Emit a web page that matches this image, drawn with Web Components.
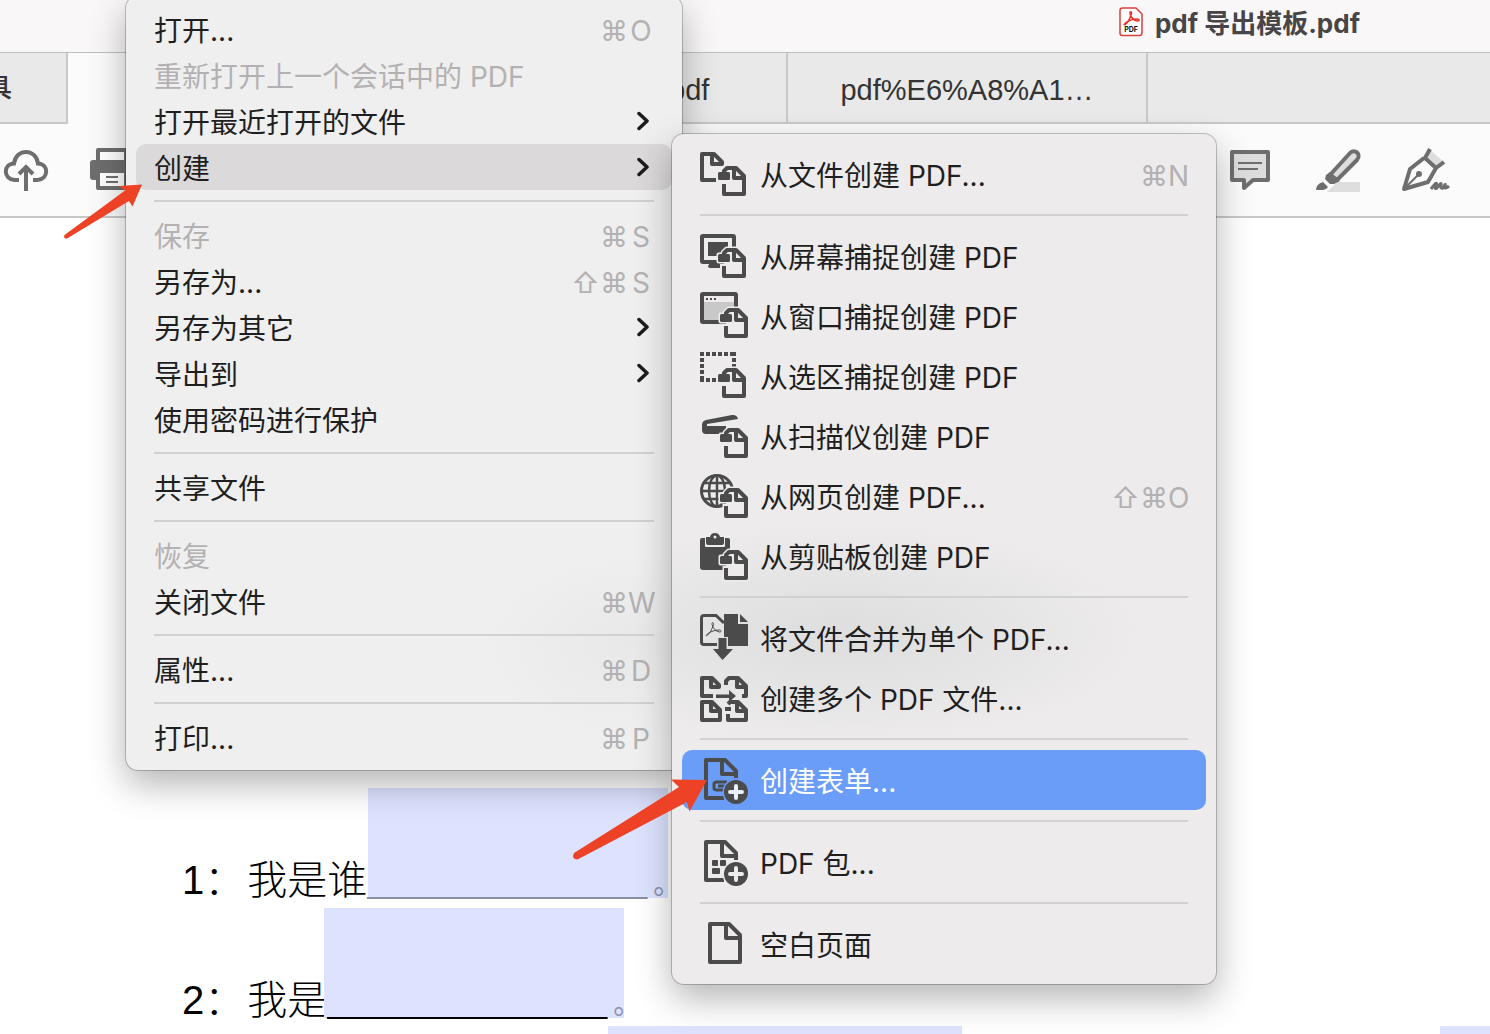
<!DOCTYPE html>
<html lang="zh-CN">
<head>
<meta charset="utf-8">
<title>pdf导出模板.pdf</title>
<style>
  html, body { height: 100%; }
  body { margin: 0; overflow: hidden; background: #fff; color: #1f1f1f; font-family: Inter, "Noto Sans CJK SC", sans-serif; }
</style>
</head>
<body>
<reader-app></reader-app>
<script>
const define = (name, html, setup) => {
  const template = document.createElement('template');
  template.innerHTML = html;
  customElements.define(name, class extends HTMLElement {
    constructor() {
      super();
      this.attachShadow({ mode: 'open' }).append(template.content.cloneNode(true));
    }
    connectedCallback() { if (setup) setup(this, this.shadowRoot); }
  });
};

const acrobat = '<path d="M7 21.500c2-1 5-6 6.500-11 .5-2.500-2-2.500-1.500 0 1 4 4 7 7.500 7.500 2.500 0 2-2-.5-2-4 0-8 1.500-11 3.500-2 1.500-2.500 3-1 2z"/>';

/* A page with a folded corner, fed by a connector on its left side. */
const target = (dx = 2, dy = 0) => {
  const lines = '<path d="M24 34V44H44V26L36 18H27L24 21V26M34 18V28H44"/>';
  const plug = '<rect x="18" y="22" width="12" height="8" rx="1.500" stroke="none"/>';
  return `<g transform="translate(${dx} ${dy})" stroke-linejoin="round">
    <path d="M24 32V44H44V26L36 18H27L24 21V30" fill="var(--surface)" stroke="var(--surface)" stroke-width="7"/>
    <rect x="16.500" y="20.500" width="14" height="11" rx="2" fill="var(--surface)"/>
    <g fill="none" stroke="currentColor" stroke-width="4">${lines}</g>
    <g fill="currentColor">${plug}</g></g>`;
};
const plusBadge = `<circle cx="36" cy="36" r="13.500" fill="var(--surface)"/><circle cx="36" cy="36" r="12" fill="currentColor"/>
  <path d="M36 30v12M30 36h12" stroke="var(--plus, var(--surface))" stroke-width="4" stroke-linecap="round"/>`;
const bigPage = '<path d="M24 42H6V4H25L36 15V22M22 4V18H36" fill="none" stroke="currentColor" stroke-width="4" stroke-linejoin="round"/>';

const icons = {
  file: `<path d="M16 30H2V4H14L22 12V14H12V4" fill="none" stroke="currentColor" stroke-width="4" stroke-linejoin="round"/>${target(0)}`,
  screen: `<rect x="2" y="4" width="32" height="26" rx="1" fill="none" stroke="currentColor" stroke-width="4"/><path d="M8 10h20v14H8zM10 31h10v5H10q-2 0-2-2z" fill="currentColor"/>${target(0)}`,
  window: `<path d="M4 10h30v18H4z" fill="#c9c8c9"/><rect x="2" y="2" width="34" height="28" rx="1" fill="none" stroke="currentColor" stroke-width="4"/><path d="M6 6h2v2H6zM10 6h2v2h-2zM14 6h2v2h-2z" fill="currentColor"/>${target()}`,
  region: `<g fill="none" stroke="currentColor" stroke-width="4"><path d="M0 2H36" stroke-dasharray="4 2"/><path d="M2 6V30M34 0V16" stroke-dasharray="4 2"/><path d="M0 28H20" stroke-dasharray="4 2"/></g>${target(0)}`,
  scanner: `<path d="M2 13Q2 9 6 8L32 3Q37 2.500 38 7L7 12V14H26V22H6Q2 22 2 18z" fill="currentColor"/>${target()}`,
  web: `<g fill="none" stroke="currentColor" stroke-width="2.500"><circle cx="17" cy="19" r="15.500" stroke-width="3"/><ellipse cx="17" cy="19" rx="8" ry="15.500"/><path d="M17 4v30M2 19h30M5 11h24M5 27h24"/></g>${target()}`,
  clipboard: `<path d="M2 6H28Q30 6 30 8V38H3Q0 38 0 35V8Q0 6 2 6z" fill="currentColor"/><path d="M5 4H25V14Q25 15 24 15H6Q5 15 5 14z" fill="var(--surface)"/><path d="M6 5H10Q11 1 15 1T20 5H24V11Q24 13 22 13H8Q6 13 6 11z" fill="currentColor"/><circle cx="15" cy="5" r="1.500" fill="var(--surface)"/>${target(2, 2)}`,
  combine: `<path d="M17 30.500H4Q1.500 30.500 1.500 28V4Q1.500 1.500 4 1.500H16L24 9" fill="none" stroke="currentColor" stroke-width="3"/><path d="M24 0H38V10H48V32H24zM40 0L48 8H40z" fill="currentColor"/><path d="M17 23h11v11h6L22.500 47 11 34h6z" fill="#e2e1e2"/><path d="M18.500 24h8v11h6.500L22.500 46 13 35h5.500z" fill="currentColor"/><g fill="none" stroke="currentColor" stroke-width="1">${acrobat}</g>`,
  multiple: `<g fill="none" stroke="currentColor" stroke-width="4" stroke-linejoin="round"><path d="M13 22H2V4H12L19 11V13H11V4M26 11V7L29 4H38L46 12V22H42M37 5V13H46M2 28H12L20 36V46H2zM11 28V37H20M28 40V46H46V36L38 28H30L28 30M37 28V37H46M25 35H31"/></g><path d="M16 20.500H29V16L36 22L29 28V24H16z" fill="currentColor"/>`,
  form: `${bigPage}<path d="M27 26H17Q14 26 14 28V32Q14 34 17 34H24M18 30H27" fill="none" stroke="currentColor" stroke-width="3"/>${plusBadge}`,
  portfolio: `${bigPage}<g fill="currentColor"><rect x="12" y="22" width="6" height="6" rx="1"/><rect x="20" y="22" width="6" height="6" rx="1"/><rect x="12" y="30" width="8" height="6" rx="1"/></g>${plusBadge}`,
  blank: '<path d="M10 4H29L40 15V42H10zM26 4V18H40" fill="none" stroke="currentColor" stroke-width="4" stroke-linejoin="round"/>',

  cloud: '<g fill="none" stroke="currentColor" stroke-width="4"><path d="M15 32H10.500C-1 31-1 16 10 15.500C12 0 32 0 34 15.500C45 16 45 31 33.500 32H29"/><path d="M22 43V19M15 26L22 19L29 26" /></g>',
  printer: '<path d="M8 14V2H36V14" fill="#fff" stroke="currentColor" stroke-width="4" stroke-linejoin="round"/><rect y="12" width="44" height="20" rx="3" fill="currentColor"/><path d="M8 23H36V40H8z" fill="#fff" stroke="currentColor" stroke-width="4" stroke-linejoin="round"/><path d="M16 29H28M16 34H28" stroke="currentColor" stroke-width="2"/>',
  comment: '<path d="M2 4H38V32H23L14 40V32H2z" fill="#ddd" stroke="currentColor" stroke-width="4" stroke-linejoin="round"/><path d="M8 15H32M8 21H28" stroke="currentColor" stroke-width="2"/>',
  marker: '<path d="M11 44L21 34H44V44z" fill="#dedede"/><path d="M14 27L34 5C38 0 46 6 41 12L21 32z" fill="#ddd" stroke="currentColor" stroke-width="4" stroke-linejoin="round"/><path d="M10 27L14 24L24 33L18 36H14L9 31zM0 42Q0 36 7 34L12 39Q10 42 7 42z" fill="currentColor"/>',
  pen: '<path d="M28 2L42 14L35 20L23 9z" fill="#ddd"/><g fill="none" stroke="currentColor" stroke-width="4" stroke-linejoin="round"><path d="M28 1L23 10L34 20L42 14M22 10L8 21L2 41L26 34L34 20"/><path d="M3 40L16 27" stroke-width="2"/><path d="M29 41Q36 32 34 37T35 40Q40 33 39 37T41 40Q44 34 43 38T47 38" stroke-width="3"/></g><circle cx="17" cy="26" r="3" fill="currentColor"/>',
};

define('line-icon', '<style>:host{display:block;flex:none}svg{display:block;overflow:visible}</style><svg aria-hidden="true"></svg>', (el, root) => {
  const size = el.getAttribute('size') || 48;
  const svg = root.querySelector('svg');
  svg.setAttribute('width', size);
  svg.setAttribute('height', size);
  svg.innerHTML = icons[el.getAttribute('name')];
});

define('title-bar', `<style>
  :host{display:flex;justify-content:flex-end;align-items:flex-start;gap:12px;height:52px;padding:7px 130px 0 0;background:#f9f7f8;border-bottom:1px solid #bfbfbf;height:45px}
  h1{margin:0;font-size:26px;line-height:34px;font-weight:700;color:#474545;white-space:nowrap}
  svg{display:block;flex:none}
</style>
<svg width="24" height="30"><path d="M3.500 1H17L23 7V25.500Q23 28.500 20.500 28.500H3.500Q1 28.500 1 26V3.500Q1 1 3.500 1z" fill="#fff" stroke="#d8403a" stroke-width="1.500"/><g fill="none" stroke="#e5322b" stroke-width="1.500" transform="translate(-1 -4)">${acrobat}</g><text x="12" y="25" text-anchor="middle" font-family="Inter, sans-serif" font-size="7" font-weight="700" fill="#111">PDF</text></svg>
<h1><slot></slot></h1>`);

define('doc-tab', `<style>
  :host{display:block;flex:none;width:360px;height:71px}
  :host([edge]){width:68px}
  a{display:flex;justify-content:center;align-items:center;box-sizing:border-box;height:100%;padding-top:4px;overflow:hidden;color:#333;background:#e9e9e9;border-right:2px solid #c8c8c8;border-bottom:2px solid #c8c8c8;text-decoration:none;white-space:nowrap;font:29px/32px "Liberation Sans","Noto Sans CJK SC",sans-serif}
  :host([edge]) a{justify-content:flex-end;padding:0 54px 0 0;margin-left:-26px;font-weight:500;font-size:26px}
  :host([current]) a{background:#fbfbfb;border-color:#fbfbfb}
</style><a href="#"><slot></slot></a>`);

define('tab-strip', `<style>
  :host{display:flex;background:#e9e9e9;box-shadow:inset 0 -2px #c8c8c8}
</style><slot></slot>`);

define('tool-button', `<style>
  :host{display:block;color:#6e6e6e}
  button{display:block;margin:0;padding:0;border:0;background:none;color:inherit}
</style><button type="button"></button>`, (el, root) => {
  const button = root.querySelector('button');
  button.setAttribute('aria-label', el.getAttribute('label'));
  button.innerHTML = `<line-icon size="44" name="${el.getAttribute('icon')}"></line-icon>`;
});

define('tool-bar', `<style>
  :host{display:flex;justify-content:space-between;align-items:center;height:92px;padding:0 44px 0 4px;background:#fbfbfb;border-bottom:2px solid #c8c8c8}
  div{display:flex;gap:42px}
</style><div><slot name="start"></slot></div><div><slot name="end"></slot></div>`);

define('menu-line', '<style>:host{display:block;height:2px;margin:10px 18px;background:#d2d1d2}</style>');

define('menu-item', `<style>
  :host{display:block}
  button{display:flex;align-items:center;gap:12px;box-sizing:border-box;width:100%;height:var(--row);margin:0;padding:4px 18px 0;border:0;border-radius:10px;background:none;color:inherit;font:inherit;font-size:28px;line-height:40px;text-align:left;white-space:nowrap}
  line-icon{color:#4b4b4b;margin-top:-4px}
  .label{flex:1}
  .keys{display:flex;align-items:center;color:#b3b1b2}
  .keys b{font-weight:400;text-align:center;width:26px}
  :host([snug]) .keys b{width:20px}
  .more{margin:-4px 5px 0 0}
  :host([disabled]) button{color:#b3b1b2}
  :host([open]) button{background:#dbd9da}
  :host([active]) button{background:#6a9df8;color:#fff}
  :host([active]){--surface:#6a9df8;--plus:#e9effb}
</style><button type="button" role="menuitem"><span class="label"><slot></slot></span></button>`, (el, root) => {
  const button = root.querySelector('button');
  const icon = el.getAttribute('icon');
  if (icon) button.insertAdjacentHTML('afterbegin', `<line-icon name="${icon}"></line-icon>`);
  if (el.hasAttribute('disabled')) button.setAttribute('aria-disabled', 'true');
  if (el.hasAttribute('more')) {
    button.setAttribute('aria-haspopup', 'menu');
    button.insertAdjacentHTML('beforeend', '<svg class="more" width="12" height="20" aria-hidden="true"><path d="M2 2.500L10 10L2 17.500" fill="none" stroke="#1c1c1c" stroke-width="3.500" stroke-linecap="round" stroke-linejoin="round"/></svg>');
  }
  const keys = el.getAttribute('keys');
  if (keys) {
    const parts = [...keys].map(k => k === '⌘' || k === '⇧' ? `<span>${k}</span>` : `<b>${k}</b>`);
    button.insertAdjacentHTML('beforeend', `<span class="keys">${parts.join('')}</span>`);
  }
});

define('pop-menu', `<style>
  :host{display:block;position:absolute;box-sizing:border-box;padding:10px;border-radius:12px;background:var(--tint, none) var(--surface);box-shadow:0 0 0 1px rgba(0,0,0,.22),0 14px 36px rgba(0,0,0,.3)}
</style><div role="menu"><slot></slot></div>`);

define('form-line', `<style>
  :host{display:flex;align-items:baseline;gap:3px;height:120px;padding:72px 0 0 182px;color:#000;font:300 40px/40px "Liberation Sans","Noto Sans CJK SC",sans-serif;white-space:nowrap;box-sizing:border-box}
  .field{position:relative;z-index:0}
  .rule{font-family:"Liberation Serif",serif;color:var(--rule,#000)}
  .stop{color:#8b91ad;font-size:28px;font-weight:400;padding-left:6px}
  input{position:absolute;z-index:-1;left:var(--lead,0px);bottom:4px;width:300px;height:110px;box-sizing:border-box;margin:0;padding:0;border:0;background:#dde3ff}
</style><span><slot name="number"></slot></span><label><slot></slot><span class="field"><input type="text"><span class="rule">______________</span><span class="stop">。</span></span></label>`);

define('field-row', `<style>
  :host{display:flex;align-items:flex-start;justify-content:space-between;margin-top:-2px;padding-left:608px}
  input{display:block;box-sizing:border-box;width:354px;height:110px;margin:0;padding:0;border:0;background:#dde3ff}
  input + input{width:50px}
</style><input type="text" aria-label="3"><input type="text" aria-label="4">`);

define('red-arrows', `<style>
  :host{display:block;position:absolute;inset:0;pointer-events:none}
  svg{display:block;width:100%;height:100%}
</style><svg aria-hidden="true"><g fill="#ee4226">
  <path d="M142 184.500L119 186L125 190.500L64.500 235Q63 239 67 238.500L129 201L132.500 206.500z"/>
  <path d="M707 780L671 779.500L679 787L574 853Q571 859 577.500 859.500L687 802L689.500 811.500z"/>
</g></svg>`);

define('reader-app', `<style>
  :host{display:block;position:relative;height:100vh;overflow:hidden;background:#fff}
  main{padding-top:570px}
  .file{left:126px;top:-4px;width:556px;--row:46px;--surface:#efefef;--tint:radial-gradient(ellipse 150px 90px at 510px 650px,#e8e8e8,transparent)}
  .create{left:672px;top:134px;width:544px;--row:60px;--surface:#edebec;--tint:radial-gradient(ellipse 300px 110px at 170px 500px,#dfdfe0 10%,transparent)}
</style>
<title-bar>pdf 导出模板.pdf</title-bar>
<tab-strip>
  <doc-tab edge>具</doc-tab><doc-tab current></doc-tab><doc-tab>pdf导出模板.pdf</doc-tab><doc-tab>pdf%E6%A8%A1…</doc-tab>
</tab-strip>
<tool-bar>
  <tool-button slot="start" icon="cloud" label="上传"></tool-button>
  <tool-button slot="start" icon="printer" label="打印"></tool-button>
  <tool-button slot="end" icon="comment" label="注释"></tool-button>
  <tool-button slot="end" icon="marker" label="高亮"></tool-button>
  <tool-button slot="end" icon="pen" label="签名"></tool-button>
</tool-bar>
<main>
  <form-line style="--rule:#8b8fa6;--lead:1px"><span slot="number">1：</span>我是谁</form-line>
  <form-line style="--lead:-3px"><span slot="number">2：</span>我是</form-line>
  <field-row></field-row>
</main>
<pop-menu class="file">
  <menu-item keys="⌘O">打开...</menu-item>
  <menu-item disabled>重新打开上一个会话中的 PDF</menu-item>
  <menu-item more>打开最近打开的文件</menu-item>
  <menu-item more open>创建</menu-item>
  <menu-line></menu-line>
  <menu-item disabled keys="⌘S">保存</menu-item>
  <menu-item keys="⇧⌘S">另存为...</menu-item>
  <menu-item more>另存为其它</menu-item>
  <menu-item more>导出到</menu-item>
  <menu-item>使用密码进行保护</menu-item>
  <menu-line></menu-line>
  <menu-item>共享文件</menu-item>
  <menu-line></menu-line>
  <menu-item disabled>恢复</menu-item>
  <menu-item keys="⌘W">关闭文件</menu-item>
  <menu-line></menu-line>
  <menu-item keys="⌘D">属性...</menu-item>
  <menu-line></menu-line>
  <menu-item keys="⌘P">打印...</menu-item>
</pop-menu>
<pop-menu class="create">
  <menu-item snug icon="file" keys="⌘N">从文件创建 PDF...</menu-item>
  <menu-line></menu-line>
  <menu-item icon="screen">从屏幕捕捉创建 PDF</menu-item>
  <menu-item icon="window">从窗口捕捉创建 PDF</menu-item>
  <menu-item icon="region">从选区捕捉创建 PDF</menu-item>
  <menu-item icon="scanner">从扫描仪创建 PDF</menu-item>
  <menu-item snug icon="web" keys="⇧⌘O">从网页创建 PDF...</menu-item>
  <menu-item icon="clipboard">从剪贴板创建 PDF</menu-item>
  <menu-line></menu-line>
  <menu-item icon="combine">将文件合并为单个 PDF...</menu-item>
  <menu-item icon="multiple">创建多个 PDF 文件...</menu-item>
  <menu-line></menu-line>
  <menu-item active icon="form">创建表单...</menu-item>
  <menu-line></menu-line>
  <menu-item icon="portfolio">PDF 包...</menu-item>
  <menu-line></menu-line>
  <menu-item icon="blank">空白页面</menu-item>
</pop-menu>
<red-arrows></red-arrows>`);
</script>
</body>
</html>
